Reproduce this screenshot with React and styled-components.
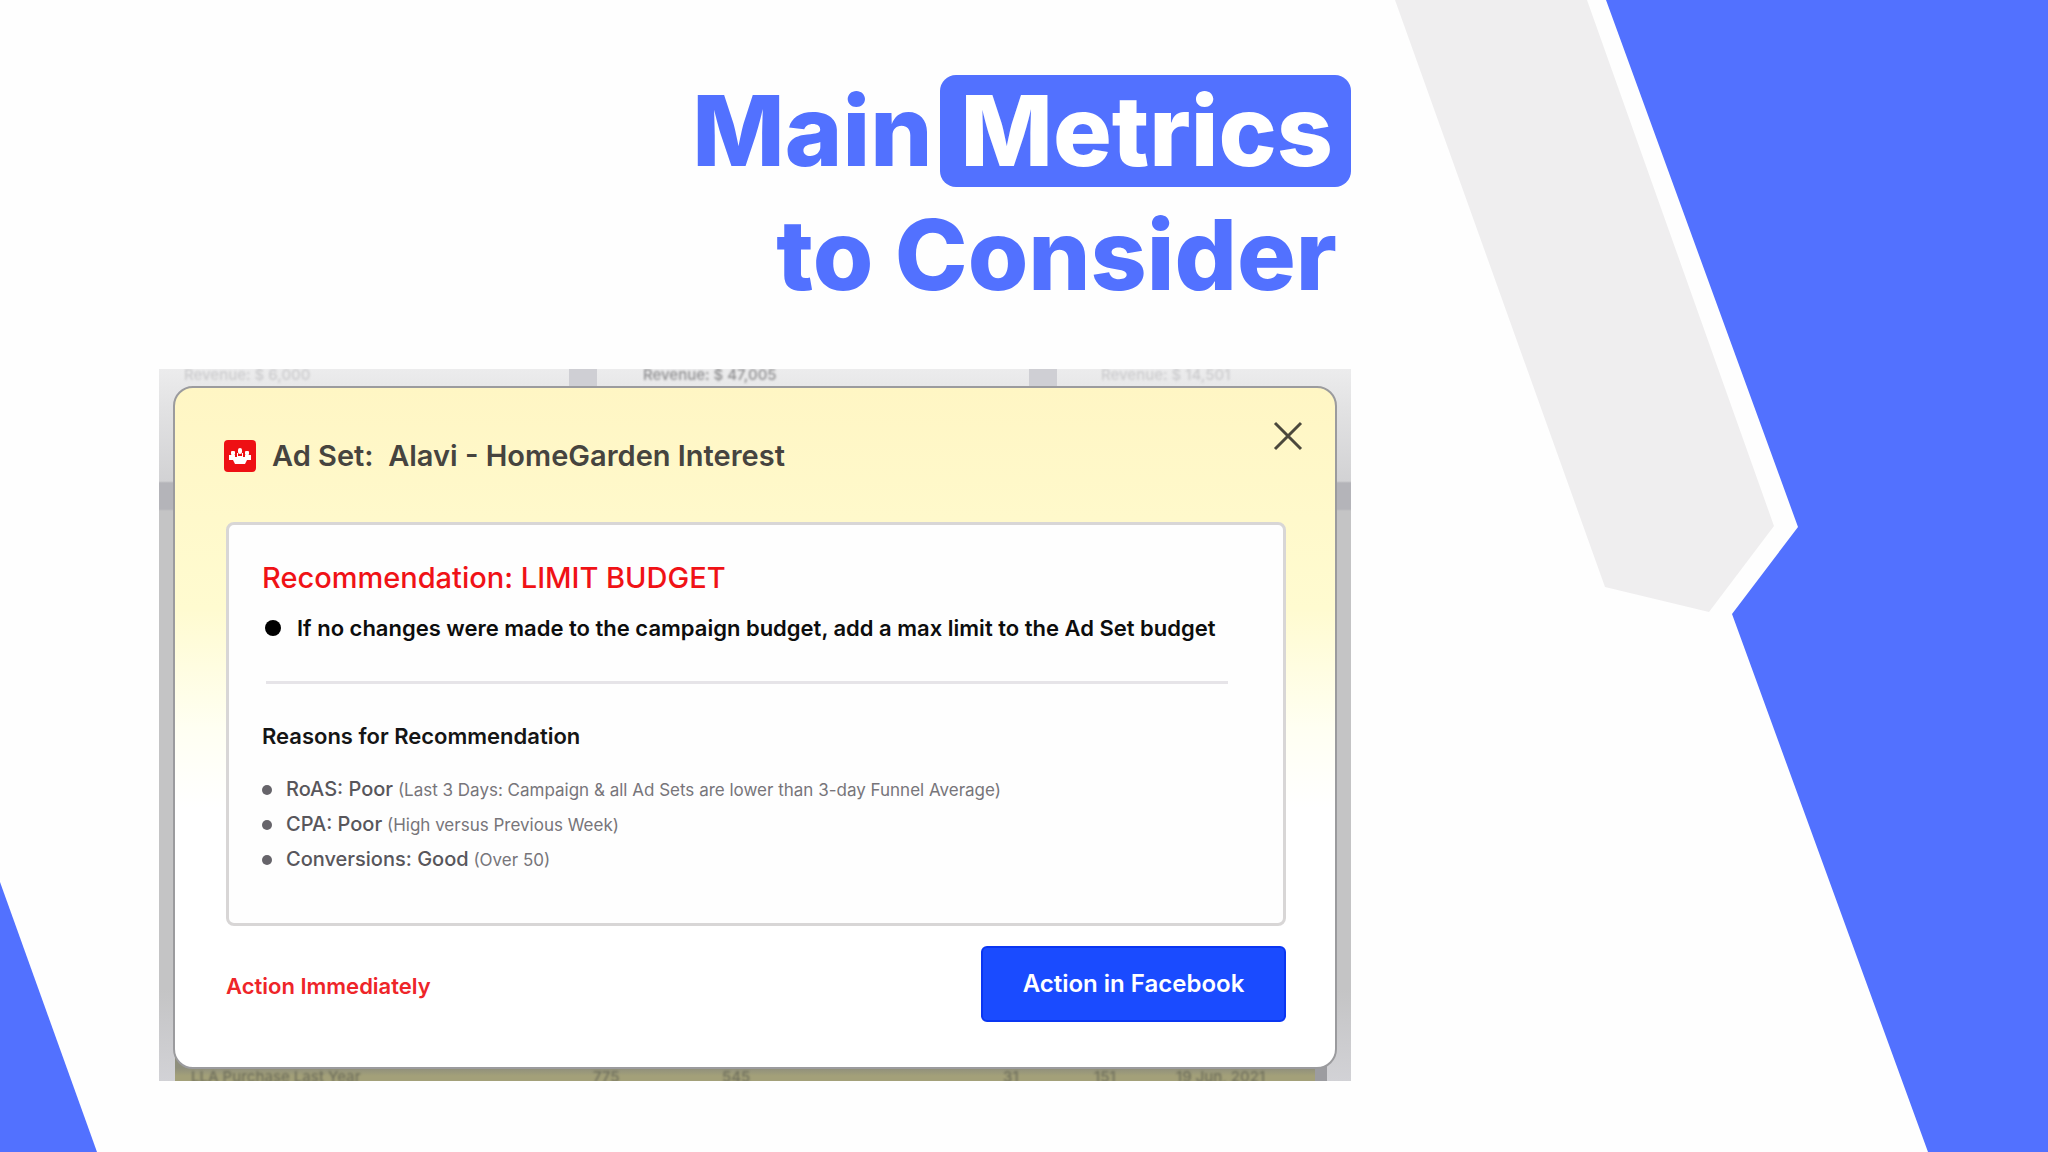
import React from 'react';
import styled, { createGlobalStyle } from 'styled-components';

const Global = createGlobalStyle`
  * { box-sizing: border-box; }
  body { margin: 0; background: #fefefe; font-family: Inter, "Liberation Sans", sans-serif; }
  h1, h2, h3, p, ul { margin: 0; padding: 0; }
`;

const Page = styled.main`
  position: relative;
  min-height: 100vh;
  overflow: hidden;
  padding: 75px 697px 71px 159px;
`;

const Backdrop = styled.svg`
  position: absolute;
  inset: 0;
  width: 100%;
  height: 100%;
`;

const Content = styled.div`
  position: relative;
  display: flex;
  flex-direction: column;
  gap: 58px;
`;

const Title = styled.h1`
  display: flex;
  flex-direction: column;
  align-items: flex-end;
  gap: 12px;
  color: #5271ff;
  font-size: 98px;
  line-height: 112px;
  font-weight: 800;
  white-space: nowrap;
`;

const TitleLine = styled.span`
  display: flex;
  gap: 8px;
  padding-right: ${(p) => (p.$inset ? '14px' : '0')};
`;

const Highlight = styled.span`
  padding: 0 18px 0 20px;
  border-radius: 16px;
  background: #5271ff;
  color: #fff;
`;

const Shot = styled.section`
  position: relative;
  overflow: hidden;
  padding: 17px 14px 12px;
  background: linear-gradient(#ececed 0, #e2e2e3 40px, #d2d2d4 112px, #b4b4b9 114px, #b4b4b9 140px, #c4c4c5 142px, #c4c4c5 620px, #d2d2d6 100%);
`;

const Strip = styled.div`
  position: absolute;
  top: 0;
  left: 0;
  right: 0;
  height: 18px;
  overflow: hidden;
  display: grid;
  grid-template-columns: 25px 385px 28px 46px 386px 28px 44px 1fr;
  align-items: start;
  font-size: 15px;
  line-height: 12px;
  font-weight: 500;
  white-space: nowrap;
`;

const BottomStrip = styled(Strip)`
  top: auto;
  bottom: 0;
  left: 16px;
  right: 24px;
  height: 26px;
  grid-template-columns: 16px 402px 129px 281px 91px 82px 1fr;
  align-items: end;
  line-height: 8px;
  border-right: 12px solid #9c9ca0;
  background: linear-gradient(#8f8f7c 50%, #a3a079 80%);
`;

const Ghost = styled.span`
  color: ${(p) => p.$tone};
  filter: blur(1px);
`;

const Gutter = styled.span`
  height: 18px;
  background: #cfcfd4;
`;

const Modal = styled.div`
  position: relative;
  display: flex;
  flex-direction: column;
  padding: 32px 49px 45px 51px;
  border: 2px solid #9b9b9e;
  border-radius: 20px;
  background: linear-gradient(#fff6c4 0, #fffbd0 220px, #fffff2 340px, #fff 420px);
`;

const Header = styled.header`
  display: flex;
  justify-content: space-between;
  align-items: flex-start;
  margin: 0 0 48px -2px;
`;

const Heading = styled.div`
  display: flex;
  align-items: center;
  gap: 16px;
  padding-top: 18px;
`;

const Badge = styled.svg`
  width: 32px;
  height: 32px;
`;

const HeadingText = styled.h2`
  font-size: 29px;
  line-height: 36px;
  font-weight: 600;
  color: #46443f;
  white-space: pre;
`;

const Close = styled.button`
  display: flex;
  margin-right: -18px;
  padding: 0;
  border: 0;
  background: none;
  color: #4b483c;
  cursor: pointer;
`;

const Panel = styled.section`
  padding: 35px 55px 46px 33px;
  border: 3px solid #d8d6d6;
  border-radius: 8px;
  background: #fefefe;
`;

const Verdict = styled.h3`
  font-size: 29px;
  line-height: 36px;
  font-weight: 500;
  color: #f01216;
`;

const Bullets = styled.ul`
  list-style: none;
`;

const Advice = styled.li`
  display: flex;
  align-items: center;
  gap: 16px;
  margin-top: 18px;
  padding-left: 3px;
  font-size: 22px;
  line-height: 28px;
  font-weight: 600;
  color: #0d0d0d;
  white-space: nowrap;

  &::before {
    content: '';
    width: 16px;
    height: 16px;
    border-radius: 50%;
    background: #000;
  }
`;

const Rule = styled.hr`
  height: 3px;
  margin: 39px 0 38px 4px;
  border: 0;
  background: #e6e4e8;
`;

const Subheading = styled.h3`
  margin-bottom: 22px;
  font-size: 22px;
  line-height: 28px;
  font-weight: 600;
  color: #151515;
`;

const Reason = styled.li`
  display: flex;
  align-items: center;
  gap: 14px;
  height: 35px;
  font-size: 17px;
  line-height: 35px;
  color: #77757a;
  white-space: nowrap;

  &::before {
    content: '';
    width: 10px;
    height: 10px;
    border-radius: 50%;
    background: #66646a;
  }
`;

const Metric = styled.strong`
  font-size: 20px;
  font-weight: 500;
  color: #58565b;
`;

const Footer = styled.footer`
  display: flex;
  justify-content: space-between;
  align-items: center;
  margin-top: 20px;
`;

const Urgency = styled.p`
  padding-top: 4px;
  font-size: 22px;
  line-height: 28px;
  font-weight: 600;
  color: #ee2529;
`;

const Action = styled.button`
  width: 305px;
  height: 76px;
  border: 2px solid #0a36f2;
  border-radius: 6px;
  background: #1a4bff;
  color: #fff;
  font: 600 24px/28px Inter, "Liberation Sans", sans-serif;
  cursor: pointer;
`;

const reasons = [
  ['RoAS: Poor', '(Last 3 Days: Campaign & all Ad Sets are lower than 3-day Funnel Average)'],
  ['CPA: Poor', '(High versus Previous Week)'],
  ['Conversions: Good', '(Over 50)'],
];

const tableCells = ['LLA Purchase Last Year', '775', '545', '31', '151', '19 Jun, 2021'];

export default function App() {
  return (
    <Page>
      <Global />
      <Backdrop viewBox="0 0 2048 1152" preserveAspectRatio="none" aria-hidden="true">
        <polygon points="1395,0 1587,0 1774,526 1709,612 1605,587" fill="#efeeef" />
        <polygon points="1606,0 2048,0 2048,1152 1928,1152 1732,614 1798,527" fill="#5271ff" />
        <polygon points="0,882 97,1152 0,1152" fill="#5271ff" />
      </Backdrop>
      <Content>
        <Title>
          <TitleLine>
            Main <Highlight>Metrics</Highlight>
          </TitleLine>
          <TitleLine $inset>to Consider</TitleLine>
        </Title>
        <Shot>
          <Strip>
            <span />
            <Ghost $tone="#cbcbcd">Revenue: $ 6,000</Ghost>
            <Gutter />
            <span />
            <Ghost $tone="#8e8e90">Revenue: $ 47,005</Ghost>
            <Gutter />
            <span />
            <Ghost $tone="#cbcbcd">Revenue: $ 14,501</Ghost>
          </Strip>
          <BottomStrip>
            <span />
            {tableCells.map((cell) => (
              <Ghost key={cell} $tone="#6f6f5c">{cell}</Ghost>
            ))}
          </BottomStrip>
          <Modal role="dialog" aria-labelledby="adset">
            <Header>
              <Heading>
                <Badge viewBox="0 0 32 32" aria-hidden="true">
                  <rect width="32" height="32" rx="4" fill="#ee1014" />
                  <g fill="#fff">
                    <rect x="14" y="8" width="4" height="6" rx="2" />
                    <rect x="7" y="11" width="4" height="4" rx="1" />
                    <rect x="21" y="11" width="4" height="4" rx="1" />
                    <path d="M5 15h6v2h2v-4h1v3h4v-3h1v4h2v-2h6v5h-4l-2 4H11l-2-4H5z" />
                  </g>
                </Badge>
                <HeadingText id="adset">{'Ad Set:  Alavi - HomeGarden Interest'}</HeadingText>
              </Heading>
              <Close aria-label="Close">
                <svg width="32" height="32" viewBox="0 0 32 32" fill="none" stroke="currentColor" strokeWidth="3">
                  <path d="M3 3l26 26M29 3L3 29" />
                </svg>
              </Close>
            </Header>
            <Panel>
              <Verdict>Recommendation: LIMIT BUDGET</Verdict>
              <Bullets>
                <Advice>If no changes were made to the campaign budget, add a max limit to the Ad Set budget</Advice>
              </Bullets>
              <Rule />
              <Subheading>Reasons for Recommendation</Subheading>
              <Bullets>
                {reasons.map(([metric, note]) => (
                  <Reason key={metric}>
                    <span>
                      <Metric>{metric}</Metric> {note}
                    </span>
                  </Reason>
                ))}
              </Bullets>
            </Panel>
            <Footer>
              <Urgency>Action Immediately</Urgency>
              <Action>Action in Facebook</Action>
            </Footer>
          </Modal>
        </Shot>
      </Content>
    </Page>
  );
}
